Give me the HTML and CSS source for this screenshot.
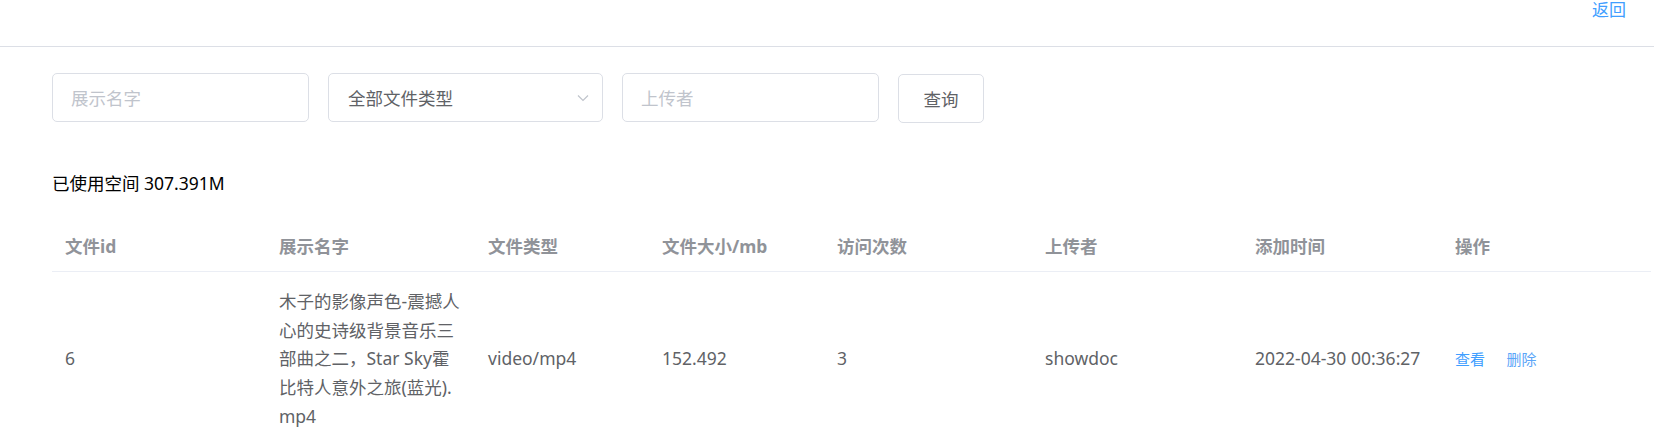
FILE: index.html
```html
<!DOCTYPE html>
<html lang="zh-CN">
<head>
    <meta charset="UTF-8">
    <title>附件管理</title>
    <link rel="stylesheet" href="styles.css">
</head>
<body>
    <div class="topbar">
        <a class="back" href="#">返回</a>
    </div>

    <div class="main">
        <div class="filters">
            <div class="field">
                <input type="text" placeholder="展示名字">
            </div>
            <div class="field select">
                <span class="select-value">全部文件类型</span>
                <svg class="arrow" width="12" height="8" viewBox="0 0 12 8">
                    <path d="M1 1.5 L6 6.5 L11 1.5" fill="none" stroke="#c0c4cc" stroke-width="1.2"/>
                </svg>
            </div>
            <div class="field">
                <input type="text" placeholder="上传者">
            </div>
            <button class="btn">查询</button>
        </div>

        <p class="used">已使用空间 307.391M</p>

        <table class="files">
            <colgroup>
                <col style="width: 214px">
                <col style="width: 209px">
                <col style="width: 174px">
                <col style="width: 175px">
                <col style="width: 208px">
                <col style="width: 210px">
                <col style="width: 200px">
                <col style="width: 209px">
            </colgroup>
            <thead>
                <tr>
                    <th>文件id</th>
                    <th>展示名字</th>
                    <th>文件类型</th>
                    <th>文件大小/mb</th>
                    <th>访问次数</th>
                    <th>上传者</th>
                    <th>添加时间</th>
                    <th>操作</th>
                </tr>
            </thead>
            <tbody>
                <tr>
                    <td>6</td>
                    <td class="name">木子的影像声色-震撼人<br>心的史诗级背景音乐三<br>部曲之二，Star Sky霍<br>比特人意外之旅(蓝光).<br>mp4</td>
                    <td>video/mp4</td>
                    <td>152.492</td>
                    <td>3</td>
                    <td>showdoc</td>
                    <td>2022-04-30 00:36:27</td>
                    <td>
                        <a class="op" href="#">查看</a>
                        <a class="op op-del" href="#">删除</a>
                    </td>
                </tr>
            </tbody>
        </table>
    </div>
</body>
</html>
```

FILE: styles.css
```css
body {
    margin: 0;
    font-family: "Noto Sans", "Noto Sans CJK SC", sans-serif;
    font-size: 17.5px;
    color: #606266;
    background-color: #fff;
}
a {
    text-decoration: none;
}
.topbar {
    height: 46px;
    border-bottom: 1px solid #dcdfe6;
    display: flex;
    justify-content: flex-end;
    align-items: flex-start;
    padding-right: 28px;
}
.back {
    color: #409eff;
    font-size: 17px;
    line-height: 19px;
}
.main {
    padding: 26px 3px 0 52px;
}
.filters {
    display: flex;
    gap: 19px;
    align-items: flex-start;
}
.field {
    width: 257px;
    height: 49px;
    box-sizing: border-box;
    border: 1px solid #dcdfe6;
    border-radius: 5px;
    display: flex;
    align-items: center;
}
.field input {
    border: none;
    outline: none;
    width: 100%;
    padding: 0 18px;
    font-family: inherit;
    font-size: 17.5px;
    color: #606266;
    background: transparent;
}
.field input::placeholder {
    color: #c0c4cc;
}
.select {
    width: 275px;
    justify-content: space-between;
    padding: 0 13px 0 19px;
}
.select-value {
    color: #606266;
}
.btn {
    width: 86px;
    height: 49px;
    margin-top: 1px;
    border: 1px solid #dcdfe6;
    border-radius: 5px;
    background: #fff;
    color: #606266;
    font-family: inherit;
    font-size: 17.5px;
    cursor: pointer;
}
.used {
    margin: 48px 0 0;
    color: #000;
    line-height: 24px;
}
.files {
    margin-top: 24px;
    width: 1599px;
    table-layout: fixed;
    border-collapse: collapse;
}
.files th,
.files td {
    text-align: left;
    padding: 12.5px 13px;
    line-height: 28.75px;
    vertical-align: middle;
    border-bottom: 1px solid #ebeef5;
}
.files th {
    color: #909399;
    font-weight: bold;
    padding-bottom: 10.5px;
}
.files td {
    color: #606266;
    padding-top: 15px;
}
.files td.name {
    white-space: nowrap;
}
.op {
    color: #409eff;
    font-size: 15px;
    margin-right: 17px;
}
.op-del {
    color: #5ba5f8;
}
```
